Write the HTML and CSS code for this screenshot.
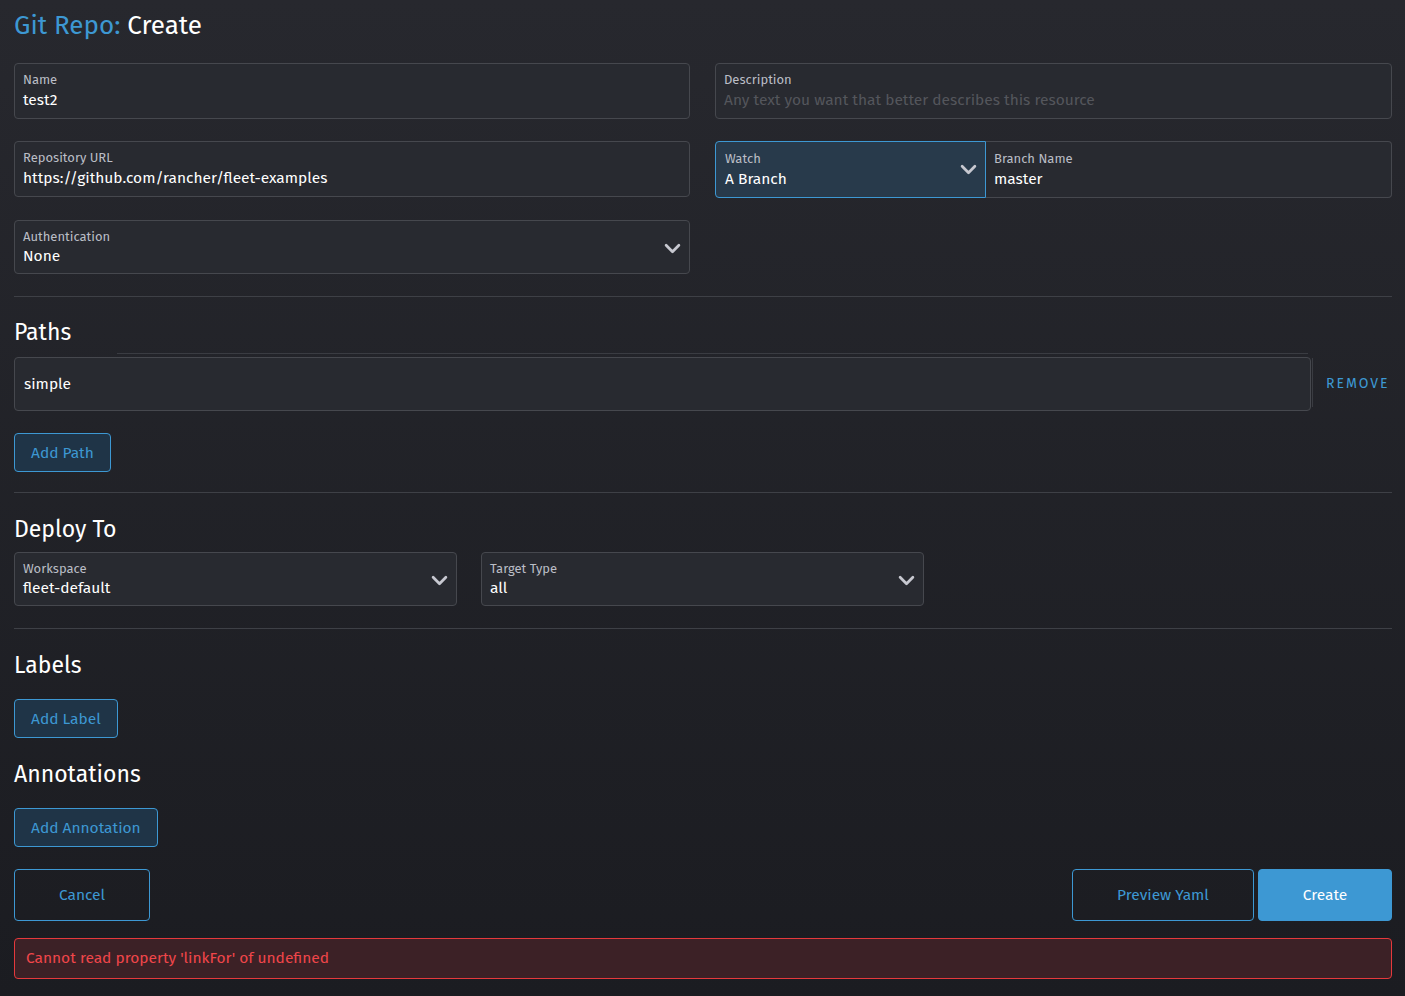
FILE: index.html
```html
<!DOCTYPE html>
<html>
<head>
<meta charset="utf-8">
<title>Git Repo: Create</title>
<link rel="stylesheet" href="styles.css">
</head>
<body>
<div class="page">
  <h1 class="title"><span class="crumb">Git Repo:</span> Create</h1>

  <div class="grid2 row-name">
    <div class="field">
      <div class="flabel">Name</div>
      <div class="fvalue">test2</div>
    </div>
    <div class="field">
      <div class="flabel">Description</div>
      <div class="fvalue placeholder">Any text you want that better describes this resource</div>
    </div>
  </div>

  <div class="grid2 row-repo">
    <div class="field">
      <div class="flabel">Repository URL</div>
      <div class="fvalue">https://github.com/rancher/fleet-examples</div>
    </div>
    <div class="combo">
      <div class="field select watch">
        <div class="flabel">Watch</div>
        <div class="fvalue">A Branch</div>
        <svg class="chev" viewBox="0 0 16 10"><path d="M2 2 L8 8 L14 2" /></svg>
      </div>
      <div class="field branch">
        <div class="flabel">Branch Name</div>
        <div class="fvalue">master</div>
      </div>
    </div>
  </div>

  <div class="grid2 row-auth">
    <div class="field select short">
      <div class="flabel">Authentication</div>
      <div class="fvalue">None</div>
      <svg class="chev" viewBox="0 0 16 10"><path d="M2 2 L8 8 L14 2" /></svg>
    </div>
  </div>

  <hr class="divider d1">

  <h2 class="section">Paths</h2>
  <div class="path-row">
    <div class="path-box">
      <div class="ghost-line"></div>
      <div class="path-input">simple</div>
      <div class="ghost-vline"></div>
    </div>
    <div class="remove">REMOVE</div>
  </div>
  <button class="btn add add-path">Add Path</button>

  <hr class="divider d2">

  <h2 class="section">Deploy To</h2>
  <div class="deploy">
    <div class="field select short">
      <div class="flabel">Workspace</div>
      <div class="fvalue">fleet-default</div>
      <svg class="chev" viewBox="0 0 16 10"><path d="M2 2 L8 8 L14 2" /></svg>
    </div>
    <div class="field select short">
      <div class="flabel">Target Type</div>
      <div class="fvalue">all</div>
      <svg class="chev" viewBox="0 0 16 10"><path d="M2 2 L8 8 L14 2" /></svg>
    </div>
  </div>

  <hr class="divider d3">

  <h2 class="section labels">Labels</h2>
  <button class="btn add add-label">Add Label</button>

  <h2 class="section annos">Annotations</h2>
  <button class="btn add add-anno">Add Annotation</button>

  <div class="footer">
    <button class="btn outline cancel">Cancel</button>
    <div class="right">
      <button class="btn outline preview">Preview Yaml</button>
      <button class="btn primary create">Create</button>
    </div>
  </div>

  <div class="error">Cannot read property 'linkFor' of undefined</div>
</div>
</body>
</html>
```

FILE: styles.css
```css
* { box-sizing: border-box; }
html, body { margin: 0; padding: 0; height: 100%; }
body {
  background: linear-gradient(180deg, #27282e 0%, #1b1c21 100%);
  color: #ffffff;
  font-family: "Fira Sans", "Noto Sans", Roboto, sans-serif;
  min-height: 996px;
}
.page {
  padding: 8px 13px 0 14px;
  display: flex;
  flex-direction: column;
}
.title {
  margin: 0;
  font-size: 26px;
  font-weight: 400;
  line-height: 36px;
  color: #ffffff;
}
.crumb { color: #3d98d3; font-weight: 400; }

.grid2 {
  display: grid;
  grid-template-columns: 676px 677px;
  column-gap: 25px;
}
.row-name { margin-top: 19px; }
.row-repo { margin-top: 22px; }
.row-auth { margin-top: 22px; }

.field {
  position: relative;
  background: #282a30;
  border: 1px solid #46484e;
  border-radius: 4px;
  height: 56px;
  padding: 7px 9px 0 8px;
}
.field.short { height: 54px; }
.flabel {
  font-size: 13px;
  line-height: 17px;
  color: #bbbec6;
}
.fvalue {
  margin-top: 1px;
  font-size: 15.5px;
  line-height: 23px;
  color: #ffffff;
}
.short .fvalue { margin-top: 0; }
.placeholder { color: #54565c; }

.select { padding-right: 40px; }
.chev {
  position: absolute;
  right: 8px;
  top: 22px;
  width: 17px;
  height: 11px;
  fill: none;
  stroke: #c7c8d0;
  stroke-width: 2.6;
  stroke-linecap: round;
  stroke-linejoin: round;
}

.combo {
  display: grid;
  grid-template-columns: 271px 1fr;
  height: 57px;
}
.combo .field { height: 57px; }
.watch {
  background: #283a4b;
  border-color: #3d98d3;
  border-radius: 4px 0 0 4px;
  padding-left: 9px;
  padding-top: 8px;
}
.branch {
  border-left: none;
  border-radius: 0 4px 4px 0;
  padding-top: 8px;
}

.deploy {
  display: grid;
  grid-template-columns: 443px 443px;
  column-gap: 24px;
  margin-top: 8px;
}

.divider {
  border: none;
  border-top: 1px solid #3e4046;
  margin: 0;
  width: 1378px;
}
.d1 { margin-top: 22px; }
.d2 { margin-top: 20px; }
.d3 { margin-top: 22px; }

.section {
  margin: 0;
  font-size: 23px;
  font-weight: 400;
  line-height: 30px;
  color: #ffffff;
}
.d1 + .section { margin-top: 20px; }
.d2 + .section { margin-top: 21px; }
.d3 + .section { margin-top: 21px; }

.path-row {
  display: flex;
  align-items: center;
  margin-top: 6px;
}
.path-box {
  position: relative;
  width: 1297px;
  height: 58px;
  padding-top: 4px;
}
.ghost-line {
  position: absolute;
  left: 103px;
  right: 3px;
  top: 0;
  border-top: 1px solid #3a3c42;
}
.ghost-vline {
  position: absolute;
  right: -2px;
  top: 5px;
  height: 49px;
  border-left: 1px solid #3a3c42;
}
.path-input {
  height: 54px;
  background: #282a30;
  border: 1px solid #46484e;
  border-radius: 4px;
  padding: 0 9px;
  font-size: 15.5px;
  line-height: 52px;
  color: #ffffff;
}
.remove {
  margin-left: 15px;
  padding-top: 2px;
  font-size: 14px;
  font-weight: 400;
  letter-spacing: 2px;
  color: #3d98d3;
}

.btn {
  font-family: inherit;
  cursor: pointer;
  border-radius: 4px;
  font-size: 15.5px;
  align-self: flex-start;
}
.btn.add {
  background: #1f3447;
  border: 1px solid #3d98d3;
  color: #3d98d3;
  height: 39px;
  padding: 0 16px;
}
.add-path { margin-top: 22px; height: 36px; padding: 0 14px; }
.labels + .add-label { margin-top: 19px; }
.annos { margin-top: 21px; }
.annos + .add-anno { margin-top: 19px; }

.footer {
  display: flex;
  justify-content: space-between;
  margin-top: 22px;
  width: 1378px;
}
.right { display: flex; gap: 4px; }
.btn.outline {
  background: transparent;
  border: 1px solid #3d98d3;
  color: #3d98d3;
  height: 52px;
}
.cancel { width: 136px; }
.preview { width: 182px; }
.btn.primary {
  background: #3d98d3;
  border: 1px solid #3d98d3;
  color: #ffffff;
  font-weight: 400;
  height: 52px;
  width: 134px;
}

.error {
  margin-top: 17px;
  width: 1378px;
  height: 41px;
  background: #3c2126;
  border: 1px solid #e5393c;
  border-radius: 4px;
  padding: 0 11px;
  font-size: 15.5px;
  line-height: 39px;
  color: #f0464a;
}
```
